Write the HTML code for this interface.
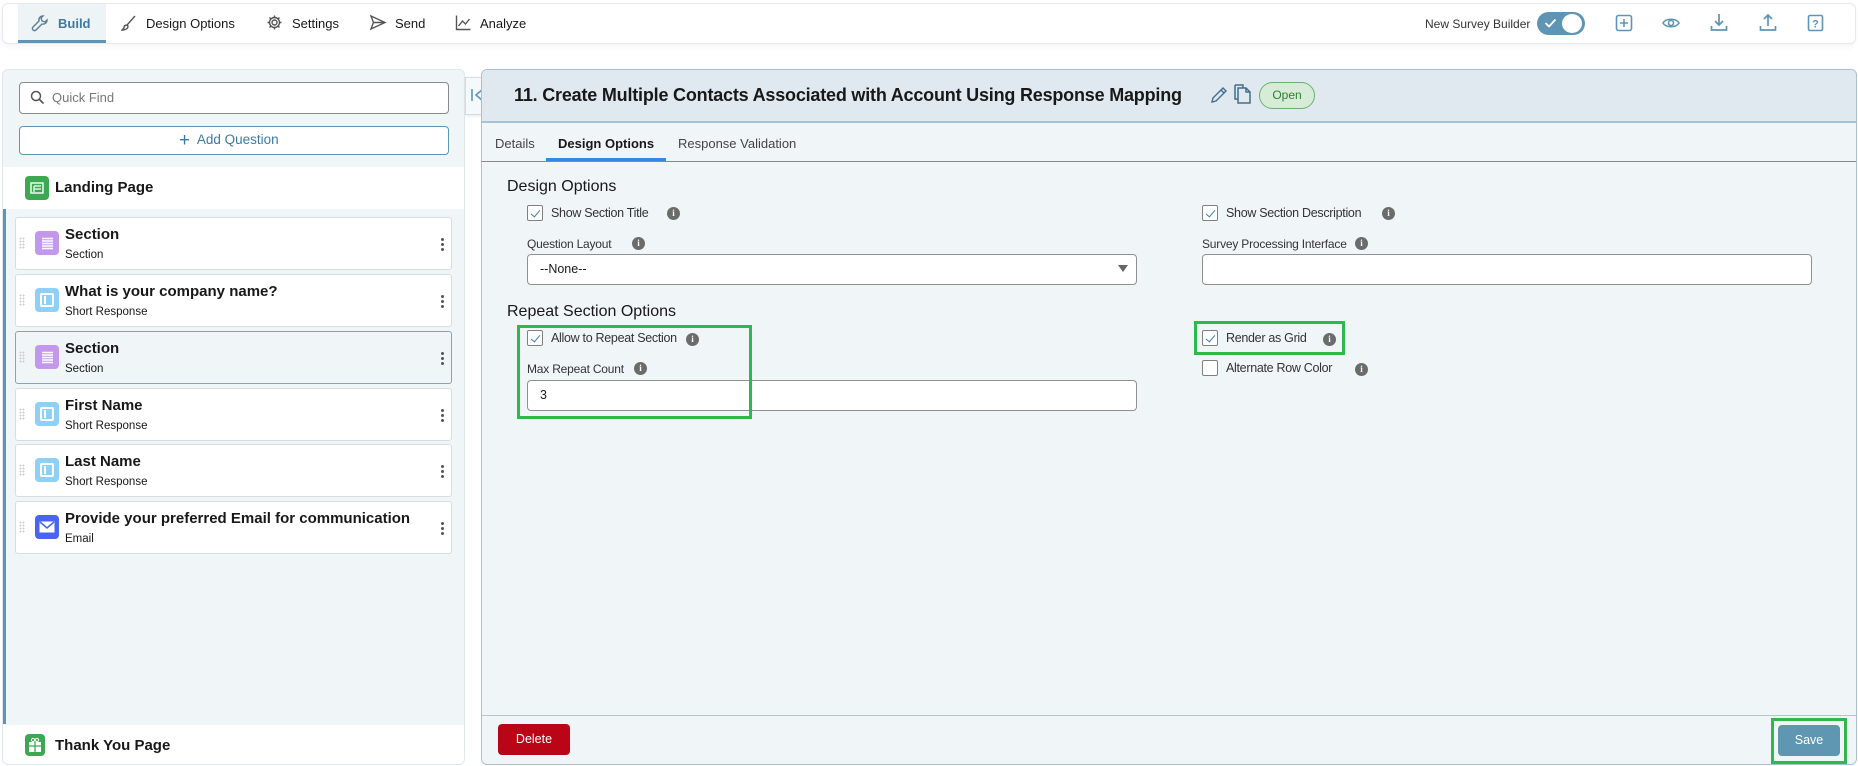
<!DOCTYPE html>
<html><head><meta charset="utf-8"><style>
*{box-sizing:border-box;margin:0;padding:0}
body{width:1858px;height:766px;background:#fff;font-family:"Liberation Sans",sans-serif;color:#181818;position:relative;overflow:hidden}
.a{position:absolute}
.topbar{left:2px;top:3px;width:1854px;height:41px;border:1px solid #e5e8ee;border-radius:6px;background:#fff;box-shadow:0 3px 6px rgba(0,0,0,0.04)}
.nav{font-size:13px;color:#181818;top:16px}
.ico{stroke:#555;fill:none;stroke-width:1.4}
.lp{left:2px;top:69px;width:463px;height:696px;background:#f0f5f8;border:1px solid #dfe6ec;border-radius:6px;overflow:hidden}
.card{left:15px;width:437px;height:53px;background:#fff;border:1px solid #d8dde3;border-radius:3px}
.card .t{position:absolute;left:49px;top:8px;font-size:15px;font-weight:bold;color:#181818}
.card .s{position:absolute;left:49px;top:31px;font-size:11.5px;color:#181818}
.card .ic{position:absolute;left:19px;top:13px;width:24px;height:24px;border-radius:4px}
.card .dots{position:absolute;right:7px;top:20px;width:3px}
.card .dots i{display:block;width:3px;height:3px;background:#555;border-radius:50%;margin-bottom:2px}
.card .grip{position:absolute;left:3px;top:19px;width:6px;height:12px;background-image:radial-gradient(#ccc 0.9px,transparent 1px);background-size:3px 3px}
.rp{left:481px;top:69px;width:1376px;height:696px;background:#f0f5f8;border:1px solid #a9c1d2;border-radius:6px;overflow:hidden}
.cb{width:16px;height:16px;border:1px solid #808080;border-radius:2px;background:#fff}
.cb.c::after{content:"";position:absolute;left:5px;top:2px;width:4px;height:8px;border:solid #3a7ca5;border-width:0 1.6px 1.6px 0;transform:rotate(40deg)}
.lbl{font-size:12.5px;color:#333;letter-spacing:-0.3px}
.sl{font-size:12px;color:#333;letter-spacing:-0.2px}
.info{width:13px;height:13px;border-radius:50%;background:#6b6b6b;color:#fff;font-size:9px;font-weight:bold;text-align:center;line-height:13px;font-family:"Liberation Serif",serif}
.inp{height:31px;border:1px solid #909090;border-radius:4px;background:#fff}
.green{border:3px solid #2eb94b}
</style></head><body>
<div class="a topbar"></div>
<div class="a" style="left:18px;top:4px;width:88px;height:39px;background:#eef3f6;border-bottom:3px solid #5f95b4"></div>
<svg class="a" style="left:31px;top:14px" width="18" height="18" viewBox="0 0 18 18"><path d="M12 2a4 4 0 0 0-4 5L2 13a2 2 0 0 0 3 3l6-6a4 4 0 0 0 5-4l-2 2-3-1-1-3z" stroke="#5a7f96" fill="none" stroke-width="1.4"/></svg>
<div class="a nav" style="left:58px;font-weight:bold;color:#3f79a0">Build</div>
<svg class="a" style="left:121px;top:15px" width="16" height="16" viewBox="0 0 16 16"><path d="M14 1L6 10M6 10c-2 0-3 1-3 3l-2 2c3 0 6-1 6-4z" class="ico"/></svg>
<div class="a nav" style="left:146px">Design Options</div>
<svg class="a" style="left:266px;top:14px" width="17" height="17" viewBox="0 0 17 17"><circle cx="8.5" cy="8.5" r="2.5" class="ico"/><path d="M8.5 1.5v2.5M8.5 13v2.5M1.5 8.5h2.5M13 8.5h2.5M3.5 3.5l1.8 1.8M11.7 11.7l1.8 1.8M3.5 13.5l1.8-1.8M11.7 5.3l1.8-1.8" class="ico"/><circle cx="8.5" cy="8.5" r="5" class="ico"/></svg>
<div class="a nav" style="left:292px">Settings</div>
<svg class="a" style="left:369px;top:14px" width="18" height="17" viewBox="0 0 18 17"><path d="M2 2l14 6.5L2 15l2.5-6.5z M4.5 8.5H16" class="ico"/></svg>
<div class="a nav" style="left:395px">Send</div>
<svg class="a" style="left:455px;top:14px" width="17" height="17" viewBox="0 0 17 17"><path d="M1.5 1.5v14h14M3.5 12l4-5 3 3 4-5" class="ico"/></svg>
<div class="a nav" style="left:480px">Analyze</div>
<div class="a" style="left:1425px;top:17px;font-size:12px;color:#333">New Survey Builder</div>
<div class="a" style="left:1537px;top:12px;width:48px;height:23px;border-radius:12px;background:#5f95b4"></div>
<div class="a" style="left:1562px;top:14px;width:20px;height:19px;border-radius:50%;background:#fff"></div>
<svg class="a" style="left:1544px;top:17px" width="13" height="12"><path d="M1.5 6l3.5 3.5 6.5-7" stroke="#fff" stroke-width="1.8" fill="none"/></svg>
<svg class="a" style="left:1615px;top:14px" width="18" height="18" viewBox="0 0 18 18"><rect x="1.5" y="1.5" width="15" height="15" rx="2" stroke="#5f95b4" fill="none" stroke-width="1.6"/><path d="M9 5v8M5 9h8" stroke="#5f95b4" stroke-width="1.6"/></svg>
<svg class="a" style="left:1662px;top:15px" width="18" height="16" viewBox="0 0 18 16"><path d="M1 8c3-5 13-5 16 0-3 5-13 5-16 0z" stroke="#5f95b4" fill="none" stroke-width="1.6"/><circle cx="9" cy="8" r="2.5" stroke="#5f95b4" fill="none" stroke-width="1.6"/></svg>
<svg class="a" style="left:1710px;top:13px" width="18" height="19" viewBox="0 0 18 19"><path d="M9 1v11M5 8l4 4 4-4M1.5 13v4h15v-4" stroke="#5f95b4" fill="none" stroke-width="1.7"/></svg>
<svg class="a" style="left:1759px;top:13px" width="18" height="19" viewBox="0 0 18 19"><path d="M9 13V2M5 6l4-4 4 4M1.5 13v4h15v-4" stroke="#5f95b4" fill="none" stroke-width="1.7"/></svg>
<svg class="a" style="left:1807px;top:14px" width="17" height="18" viewBox="0 0 17 18"><rect x="1.5" y="1.5" width="14" height="15" rx="1.5" stroke="#5f95b4" fill="none" stroke-width="1.6"/><text x="8.5" y="13.5" font-size="11" font-weight="bold" text-anchor="middle" fill="#5f95b4" font-family="Liberation Sans">?</text></svg>

<div class="a lp">
  <div class="a" style="left:16px;top:12px;width:430px;height:32px;background:#fff;border:1px solid #8a8a8a;border-radius:4px"></div>
  <svg class="a" style="left:27px;top:20px" width="15" height="15"><circle cx="6" cy="6" r="4.5" stroke="#555" fill="none" stroke-width="1.5"/><path d="M9.5 9.5l4 4" stroke="#555" stroke-width="1.6"/></svg>
  <div class="a" style="left:49px;top:20px;font-size:13px;color:#777">Quick Find</div>
  <div class="a" style="left:16px;top:56px;width:430px;height:29px;background:#fff;border:1px solid #5f95b4;border-radius:4px"></div>
  <div class="a" style="left:176px;top:62px;font-size:13.5px;color:#3f79a0"><span style="font-size:19px;line-height:14px;position:relative;top:2px">+</span>&nbsp; Add Question</div>
  <div class="a" style="left:0;top:97px;width:463px;height:42px;background:#fff"></div>
  <div class="a" style="left:22px;top:106px;width:24px;height:24px;background:#3ca852;border-radius:4px"></div>
  <svg class="a" style="left:27px;top:112px" width="14" height="12"><rect x="1" y="1" width="12" height="10" stroke="#fff" fill="none" stroke-width="1.4"/><path d="M4 4h7M4 7h7M4 4v6" stroke="#fff" stroke-width="1.2"/></svg>
  <div class="a" style="left:52px;top:109px;font-size:15px;font-weight:bold;color:#181818">Landing Page</div>
  <div class="a" style="left:0;top:139px;width:3px;height:515px;background:#5f95b4"></div>
  <div class="a" style="left:0;top:655px;width:463px;height:41px;background:#fff"></div>
  <div class="a" style="left:22px;top:664px;width:20px;height:22px;background:#3ca852;border-radius:4px"></div>
  <svg class="a" style="left:25px;top:667px" width="14" height="16"><rect x="1" y="5" width="12" height="10" fill="#fff"/><path d="M7 5v10M1 9h12" stroke="#3ca852" stroke-width="1.3"/><circle cx="5" cy="3" r="1.6" stroke="#fff" fill="none"/><circle cx="9" cy="3" r="1.6" stroke="#fff" fill="none"/></svg>
  <div class="a" style="left:52px;top:667px;font-size:15px;font-weight:bold;color:#181818">Thank You Page</div>
</div>

<div class="a card" style="top:217px"><div class="grip"></div><div class="ic" style="background:#c398ec"></div><svg class="a" style="left:25px;top:19px" width="13" height="13"><path d="M1 1.5h11M1 6.5h11M1 11.5h11M1 4h11M1 9h11" stroke="#fff" stroke-width="1.4"/></svg><div class="t">Section</div><div class="s">Section</div><div class="dots"><i></i><i></i><i></i></div></div>
<div class="a card" style="top:274px"><div class="grip"></div><div class="ic" style="background:#8fd0f6"></div><div class="a" style="left:24px;top:18px;width:14px;height:14px;border:2px solid #fff;border-radius:2px"></div><div class="a" style="left:28px;top:21px;width:2px;height:8px;background:#fff"></div><div class="t">What is your company name?</div><div class="s">Short Response</div><div class="dots"><i></i><i></i><i></i></div></div>
<div class="a card" style="top:331px;background:#f0f5f8;border-color:#7fa6be"><div class="grip"></div><div class="ic" style="background:#c398ec"></div><svg class="a" style="left:25px;top:19px" width="13" height="13"><path d="M1 1.5h11M1 6.5h11M1 11.5h11M1 4h11M1 9h11" stroke="#fff" stroke-width="1.4"/></svg><div class="t">Section</div><div class="s">Section</div><div class="dots"><i></i><i></i><i></i></div></div>
<div class="a card" style="top:388px"><div class="grip"></div><div class="ic" style="background:#8fd0f6"></div><div class="a" style="left:24px;top:18px;width:14px;height:14px;border:2px solid #fff;border-radius:2px"></div><div class="a" style="left:28px;top:21px;width:2px;height:8px;background:#fff"></div><div class="t">First Name</div><div class="s">Short Response</div><div class="dots"><i></i><i></i><i></i></div></div>
<div class="a card" style="top:444px"><div class="grip"></div><div class="ic" style="background:#8fd0f6"></div><div class="a" style="left:24px;top:18px;width:14px;height:14px;border:2px solid #fff;border-radius:2px"></div><div class="a" style="left:28px;top:21px;width:2px;height:8px;background:#fff"></div><div class="t">Last Name</div><div class="s">Short Response</div><div class="dots"><i></i><i></i><i></i></div></div>
<div class="a card" style="top:501px"><div class="grip"></div><div class="ic" style="background:#4a63f0"></div><svg class="a" style="left:23px;top:19px" width="16" height="12"><rect x="0.5" y="0.5" width="15" height="11" fill="#fff"/><path d="M1 1l7 6 7-6" stroke="#4a63f0" stroke-width="1.5" fill="none"/></svg><div class="t">Provide your preferred Email for communication</div><div class="s">Email</div><div class="dots"><i></i><i></i><i></i></div></div>

<div class="a" style="left:465px;top:77px;width:27px;height:38px;background:#f6f9fb;border:1px solid #d4dde4;border-radius:0 4px 4px 0;box-shadow:1px 1px 3px rgba(0,0,0,0.1)"></div>
<svg class="a" style="left:470px;top:87px" width="16" height="16"><path d="M2 2v12M13 2L6 8l7 6z" stroke="#5f95b4" stroke-width="1.6" fill="none"/></svg>

<div class="a rp">
  <div class="a" style="left:0;top:0;width:1376px;height:53px;background:#e0e9ef;border-bottom:2px solid #a9c1d2"></div>
  <div class="a" style="left:32px;top:15px;font-size:18px;font-weight:bold;color:#181818;letter-spacing:-0.2px">11. Create Multiple Contacts Associated with Account Using Response Mapping</div>
  <svg class="a" style="left:727px;top:15px" width="18" height="20"><path d="M3 17l1-4 10-10 3 3-10 10z M12 5l3 3" stroke="#3f6f8f" stroke-width="1.4" fill="none"/></svg>
  <svg class="a" style="left:750px;top:13px" width="20" height="22"><path d="M6 5h8l4 4v11H6z M14 5v4h4 M3 2h8v3M3 2v14h3" stroke="#3f6f8f" stroke-width="1.5" fill="none"/></svg>
  <div class="a" style="left:777px;top:12px;width:56px;height:27px;border:1px solid #6ab06f;border-radius:14px;background:#d7ecd7;font-size:12px;color:#2f7d35;text-align:center;line-height:25px">Open</div>
  <div class="a" style="left:0;top:91px;width:1376px;height:1px;background:#888"></div>
  <div class="a" style="left:13px;top:66px;font-size:13px;color:#444">Details</div>
  <div class="a" style="left:76px;top:66px;font-size:13px;font-weight:bold;color:#181818">Design Options</div>
  <div class="a" style="left:64px;top:88px;width:120px;height:3px;background:#2e8ae6"></div>
  <div class="a" style="left:196px;top:66px;font-size:13px;color:#444">Response Validation</div>

  <div class="a" style="left:25px;top:108px;font-size:16px;color:#181818">Design Options</div>
  <div class="a cb c" style="left:45px;top:135px"></div>
  <div class="a lbl" style="left:69px;top:136px">Show Section Title</div>
  <div class="a info" style="left:185px;top:137px">i</div>
  <div class="a sl" style="left:45px;top:167px">Question Layout</div>
  <div class="a info" style="left:150px;top:167px">i</div>
  <div class="a inp" style="left:45px;top:184px;width:610px"></div>
  <div class="a" style="left:58px;top:192px;font-size:12.5px;color:#181818">--None--</div>
  <svg class="a" style="left:636px;top:195px" width="10" height="8"><path d="M0 0h10L5 7z" fill="#666"/></svg>

  <div class="a cb c" style="left:720px;top:135px"></div>
  <div class="a lbl" style="left:744px;top:136px">Show Section Description</div>
  <div class="a info" style="left:900px;top:137px">i</div>
  <div class="a sl" style="left:720px;top:167px">Survey Processing Interface</div>
  <div class="a info" style="left:873px;top:167px">i</div>
  <div class="a inp" style="left:720px;top:184px;width:610px"></div>

  <div class="a" style="left:25px;top:233px;font-size:16px;color:#181818">Repeat Section Options</div>
  <div class="a cb c" style="left:45px;top:260px"></div>
  <div class="a lbl" style="left:69px;top:261px">Allow to Repeat Section</div>
  <div class="a info" style="left:204px;top:263px">i</div>
  <div class="a sl" style="left:45px;top:292px">Max Repeat Count</div>
  <div class="a info" style="left:152px;top:292px">i</div>
  <div class="a inp" style="left:45px;top:310px;width:610px"></div>
  <div class="a" style="left:58px;top:318px;font-size:12.5px;color:#181818">3</div>
  <div class="a green" style="left:35px;top:255px;width:235px;height:94px"></div>

  <div class="a cb c" style="left:720px;top:260px"></div>
  <div class="a lbl" style="left:744px;top:261px">Render as Grid</div>
  <div class="a info" style="left:841px;top:263px">i</div>
  <div class="a green" style="left:712px;top:251px;width:151px;height:34px"></div>
  <div class="a cb" style="left:720px;top:290px"></div>
  <div class="a lbl" style="left:744px;top:291px">Alternate Row Color</div>
  <div class="a info" style="left:873px;top:293px">i</div>

  <div class="a" style="left:0;top:645px;width:1376px;height:1px;background:#b8c4cc"></div>
  <div class="a" style="left:16px;top:654px;width:72px;height:31px;background:#ba0517;border-radius:4px;color:#fff;font-size:12.5px;text-align:center;line-height:31px">Delete</div>
  <div class="a green" style="left:1289px;top:648px;width:76px;height:46px"></div>
  <div class="a" style="left:1296px;top:655px;width:62px;height:31px;background:#5f97b3;border-radius:4px;color:#fff;font-size:12.5px;text-align:center;line-height:31px">Save</div>
</div>
</body></html>
